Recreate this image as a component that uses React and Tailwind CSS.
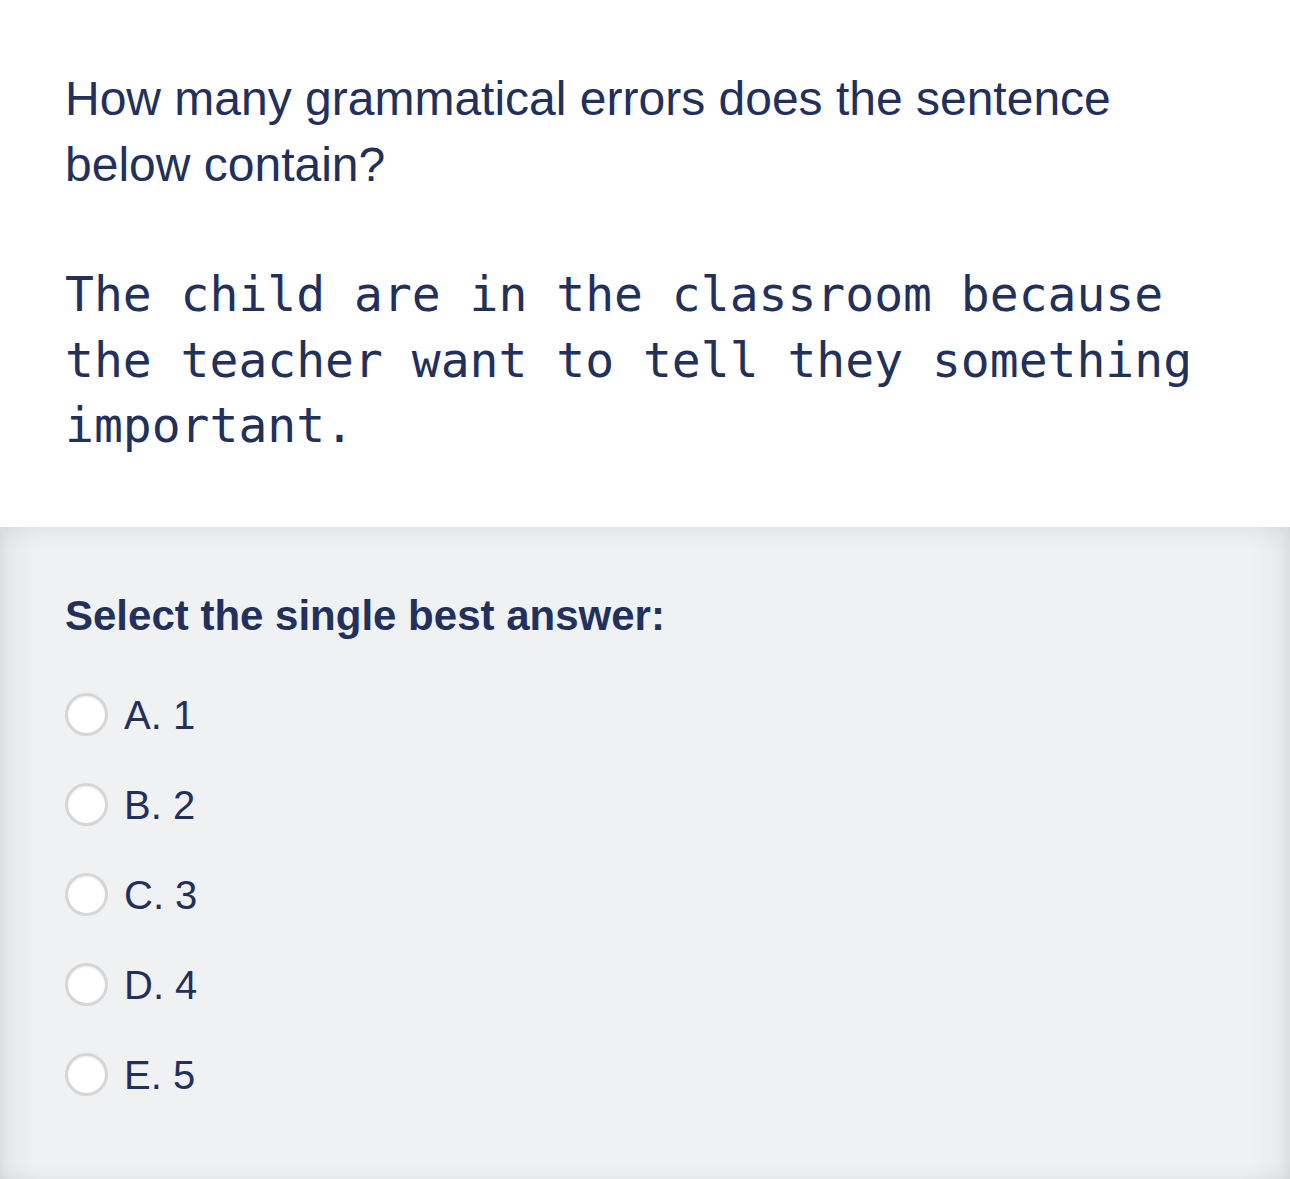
export default function App() {
  const options = ["A. 1", "B. 2", "C. 3", "D. 4", "E. 5"];

  return (
    <div className="min-h-screen bg-white text-[#22305c] font-['Liberation_Sans',Arial,sans-serif]">
      {/* Question stem */}
      <div className="px-[65px] pt-[66px] pb-[68px]">
        <h1 className="text-[48px] leading-[66px] font-normal">
          How many grammatical errors does the sentence below contain?
        </h1>
        <p className="mt-[64px] font-['DejaVu_Sans_Mono',monospace] text-[48px] leading-[65.5px]">
          The child are in the classroom because the teacher want to tell they something important.
        </p>
      </div>

      {/* Answer panel */}
      <div className="bg-[#f0f1f3] shadow-[inset_0_8px_20px_rgba(0,0,0,0.05),inset_0_-6px_14px_rgba(0,0,0,0.04),inset_40px_0_30px_-20px_rgba(0,0,0,0.04),inset_-40px_0_30px_-20px_rgba(0,0,0,0.04)] px-[65px] pt-[65px] pb-[60px]">
        <h2 className="text-[42px] leading-[48px] font-bold">Select the single best answer:</h2>
        <div className="mt-[30px] flex flex-col">
          {options.map((opt) => (
            <label key={opt} className="flex items-center h-[90px] gap-[16px]">
              <span className="w-[43px] h-[43px] rounded-full bg-white border-[3px] border-[#d6d6d6] shadow-[inset_0_1px_2px_rgba(0,0,0,0.08)] shrink-0" />
              <span className="text-[40px] leading-none">{opt}</span>
            </label>
          ))}
        </div>
      </div>
    </div>
  );
}
